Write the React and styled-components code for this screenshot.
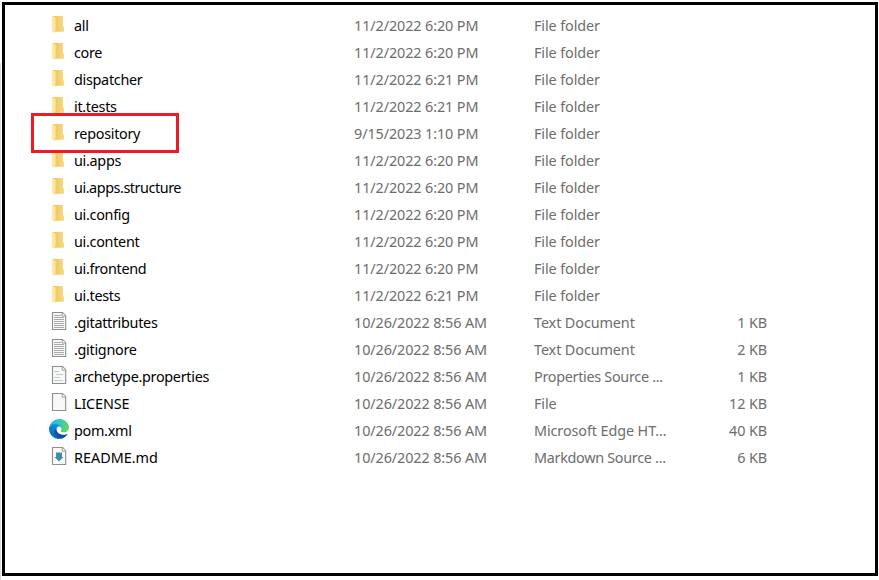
import React from "react";
import styled, { createGlobalStyle } from "styled-components";

const files = [
  { name: "all", date: "11/2/2022 6:20 PM", type: "File folder", icon: "folder" },
  { name: "core", date: "11/2/2022 6:20 PM", type: "File folder", icon: "folder" },
  { name: "dispatcher", date: "11/2/2022 6:21 PM", type: "File folder", icon: "folder" },
  { name: "it.tests", date: "11/2/2022 6:21 PM", type: "File folder", icon: "folder" },
  { name: "repository", date: "9/15/2023 1:10 PM", type: "File folder", icon: "folder", marked: true },
  { name: "ui.apps", date: "11/2/2022 6:20 PM", type: "File folder", icon: "folder" },
  { name: "ui.apps.structure", date: "11/2/2022 6:20 PM", type: "File folder", icon: "folder", tracking: -0.45 },
  { name: "ui.config", date: "11/2/2022 6:20 PM", type: "File folder", icon: "folder" },
  { name: "ui.content", date: "11/2/2022 6:20 PM", type: "File folder", icon: "folder" },
  { name: "ui.frontend", date: "11/2/2022 6:20 PM", type: "File folder", icon: "folder" },
  { name: "ui.tests", date: "11/2/2022 6:21 PM", type: "File folder", icon: "folder" },
  { name: ".gitattributes", date: "10/26/2022 8:56 AM", type: "Text Document", size: "1 KB", icon: "text" },
  { name: ".gitignore", date: "10/26/2022 8:56 AM", type: "Text Document", size: "2 KB", icon: "text" },
  { name: "archetype.properties", date: "10/26/2022 8:56 AM", type: "Properties Source ...", size: "1 KB", icon: "properties", typeTracking: -0.3 },
  { name: "LICENSE", date: "10/26/2022 8:56 AM", type: "File", size: "12 KB", icon: "blank", tracking: -0.15 },
  { name: "pom.xml", date: "10/26/2022 8:56 AM", type: "Microsoft Edge HT...", size: "40 KB", icon: "edge" },
  { name: "README.md", date: "10/26/2022 8:56 AM", type: "Markdown Source ...", size: "6 KB", icon: "markdown", tracking: 0, typeTracking: -0.3 },
];

const FolderIcon = () => (
  <Icon viewBox="0 0 20 20">
    <defs>
      <linearGradient id="folderBack" x1="0" x2="1" y1="0" y2="0">
        <stop offset="0" stopColor="#e9c35c" />
        <stop offset="1" stopColor="#f9db83" />
      </linearGradient>
    </defs>
    <path d="M4 2h10v10.500h1V17.700H5z" fill="url(#folderBack)" />
    <path d="M3 2l3.600 1.600v12.400l-.6.4V19l-3-1.600z" fill="#ffe7a0" />
  </Icon>
);

const Page = ({ fill = "#f7f8f8", children }) => (
  <Icon viewBox="0 0 20 20">
    <path d="M3.5 1.500h10l3.200 3.200v13.800H3.500z" fill={fill} stroke="#8e8e8e" strokeWidth="1.1" />
    <path d="M13.200 1.700v3.400h3.400" fill="#fff" stroke="#8e8e8e" strokeWidth="0.9" />
    {children}
  </Icon>
);

const TextIcon = () => (
  <Page>
    <path
      d="M5 4.500h7M5 6.500h10M5 8.500h10M5 10.500h10M5 12.500h10M5 14.500h10M5 16.500h10"
      stroke="#a9abac"
    />
  </Page>
);

const PropertiesIcon = () => (
  <Page>
    <path d="M5 6.500h5M7 9.500h7M5 12.500h6M5 15.500h9" stroke="#c3c8ca" />
  </Page>
);

const MarkdownIcon = () => (
  <Page fill="#fafafa">
    <path
      d="M7 6l1.500 1L10 6l1.500 1L13 6v5h1.500L10 15.500l-4.500-4.500H7z"
      fill="#438baa"
    />
  </Page>
);

const EdgeIcon = () => (
  <Icon viewBox="0 0 256 256">
    <defs>
      <linearGradient id="edgeBase" x1="0.1" x2="0.95" y1="0.5" y2="0.6">
        <stop offset="0" stopColor="#0c59a4" />
        <stop offset="1" stopColor="#114a8b" />
      </linearGradient>
      <linearGradient id="edgeMid" x1="0.7" x2="0.3" y1="0" y2="1">
        <stop offset="0" stopColor="#1b9de2" />
        <stop offset="0.4" stopColor="#1383d8" />
        <stop offset="1" stopColor="#0668b8" />
      </linearGradient>
      <linearGradient id="edgeTop" x1="0" x2="1" y1="0.4" y2="0.6">
        <stop offset="0" stopColor="#2ab5e4" />
        <stop offset="0.5" stopColor="#32c9c0" />
        <stop offset="1" stopColor="#68d850" />
      </linearGradient>
    </defs>
    <path
      fill="url(#edgeBase)"
      d="M231 190.5c-3.4 1.8-6.9 3.4-10.5 4.7a101.9 101.9 0 0 1-35.9 6.4c-47.3 0-88.5-32.5-88.5-74.3a31.5 31.5 0 0 1 16.4-27.3c-42.8 1.8-53.8 46.4-53.8 72.5 0 74 68.1 81.4 82.8 81.4 7.9 0 19.8-2.3 27-4.6l1.3-.4a128.3 128.3 0 0 0 66.6-52.8 4 4 0 0 0-5.4-5.6z"
    />
    <path
      fill="url(#edgeMid)"
      d="M105.7 241.4a79.2 79.2 0 0 1-22.7-21.3 80.7 80.7 0 0 1 29.5-120c3.2-1.5 8.5-4.1 15.6-4a32.4 32.4 0 0 1 25.7 13 31.9 31.9 0 0 1 6.3 18.7c0-.2 24.5-79.6-80-79.6C36.2 48.2.1 89.9.1 126.4a130.3 130.3 0 0 0 12.1 56A128 128 0 0 0 168.600 249a75.500 75.500 0 0 1-62.800-7.600z"
    />
    <path
      fill="url(#edgeTop)"
      d="M152.3 148.9c-.8 1-3.3 2.5-3.3 5.7 0 2.6 1.7 5.1 4.7 7.2 14.4 10 41.5 8.7 41.6 8.7 10.7 0 21.1-2.9 30.3-8.3A61.4 61.4 0 0 0 256 109.2c.3-22.4-8-37.3-11.3-43.9C223.5 23.9 177.7 0 128 0A128 128 0 0 0 0 126.2c.5-36.5 36.8-66 80-66 3.5 0 23.5.3 42 10 16.3 8.6 24.9 19 30.8 29.2 6.2 10.6 7.3 24.2 7.3 29.5s-2.7 13.3-7.800 20z"
    />
  </Icon>
);

const icons = {
  folder: FolderIcon,
  text: TextIcon,
  properties: PropertiesIcon,
  blank: Page,
  edge: EdgeIcon,
  markdown: MarkdownIcon,
};

const App = () => (
  <>
    <GlobalStyle />
    <Screen>
      <Edge />
      <Frame>
        {files.map(({ name, date, type, size, icon, marked, tracking, typeTracking }) => {
          const FileIcon = icons[icon];
          return (
            <Row key={name}>
              <FileIcon />
              <Name $tracking={tracking}>{name}</Name>
              <Cell>{date}</Cell>
              <Cell $tracking={typeTracking}>{type}</Cell>
              <Cell $right>{size}</Cell>
              {marked && <Marker />}
            </Row>
          );
        })}
      </Frame>
    </Screen>
  </>
);

const GlobalStyle = createGlobalStyle`
  body {
    margin: 0;
    background: #fff;
    overflow: hidden;
  }
`;

const Screen = styled.div`
  display: flex;
  box-sizing: border-box;
  width: 879px;
  height: 580px;
  font-family: "Noto Sans", "Open Sans", sans-serif;
`;

const Edge = styled.div`
  width: 1px;
  margin: 63px 1px 0 0;
  background: #dcdcdc;
`;

const Frame = styled.main`
  box-sizing: border-box;
  width: 876px;
  height: 574px;
  margin-top: 2px;
  padding: 8px 0 0 44px;
  border: 3px solid #000;
`;

const Row = styled.div`
  position: relative;
  display: grid;
  grid-template-columns: 25px 280px 180px 133px 100px;
  height: 27px;
  font-size: 14.4px;
  line-height: 26px;
  white-space: nowrap;
`;

const Icon = styled.svg`
  width: 20px;
  height: 20px;
  margin-top: 1px;
`;

const Name = styled.span`
  color: #000;
  letter-spacing: ${({ $tracking = -0.3 }) => $tracking}px;
`;

const Cell = styled.span`
  color: #6d6d6d;
  letter-spacing: ${({ $tracking = -0.1 }) => $tracking}px;
  text-align: ${({ $right }) => ($right ? "right" : "left")};
`;

const Marker = styled.div`
  position: absolute;
  z-index: 1;
  top: -8px;
  left: -18px;
  box-sizing: border-box;
  width: 148px;
  height: 40px;
  border: 3px solid #ed1c24;
`;

export default App;
